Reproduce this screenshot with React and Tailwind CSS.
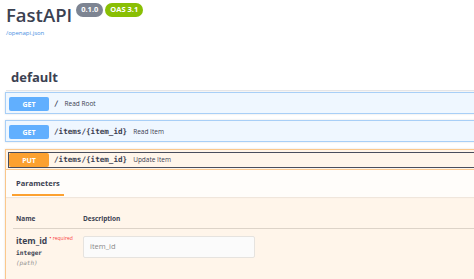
import React from 'react';

const sans = { fontFamily: '"Open Sans", "Noto Sans", sans-serif' };
const mono = { fontFamily: '"DejaVu Sans Mono", "Liberation Mono", monospace' };

function Badge({ color, children }) {
  return (
    <span
      className={`inline-flex h-[14px] items-center rounded-full px-[5px] text-[7.5px] font-bold leading-none text-white ${color}`}
    >
      {children}
    </span>
  );
}

function Summary({ method, path, label, btn, focus }) {
  const inner = (
    <div className="flex items-center">
      <span
        className={`flex h-[14px] w-[40px] items-center justify-center rounded-[2px] text-[7px] font-bold leading-none text-white ${btn}`}
      >
        {method}
      </span>
      <span style={mono} className="px-[5px] text-[7.6px] font-bold leading-none text-[#3b4151]">
        {path}
      </span>
      <span className="pl-px text-[6.5px] leading-none text-[#3b4151]">{label}</span>
    </div>
  );
  if (focus) {
    return (
      <div className="border-b border-[#fcc98f] p-[2px] pb-px">
        <div className="border border-[#4a4e5c]">{inner}</div>
      </div>
    );
  }
  return <div className="pl-[3px] pt-[4px] pb-[2px]">{inner}</div>;
}

export default function App() {
  return (
    <div style={sans} className="h-[279px] w-[474px] overflow-hidden bg-white text-[#3b4151]">
      <div className="w-[560px] pl-[6px]">
        <div className="flex items-start pt-[2px]">
          <h1 className="text-[18.5px] font-semibold leading-[25px] text-[#3b4151]">FastAPI</h1>
          <div className="ml-[4px] mt-px flex gap-[2px]">
            <Badge color="bg-[#7d8492]">0.1.0</Badge>
            <Badge color="bg-[#89bf04]">OAS 3.1</Badge>
          </div>
        </div>
        <a className="mt-[2px] block text-[6px] leading-[8px] text-[#4990e2]">/openapi.json</a>

        <div className="mt-[31px] pl-[5px]">
          <h2 className="text-[13px] font-bold leading-[18px] text-[#3b4151]">default</h2>
        </div>
        <div className="mt-[4px] border-b border-[#e6e7ea]" />

        <div className="-ml-px pt-px">
          <div className="border border-[#a8cff7] bg-[#eff7ff] shadow-[0_0_2px_rgba(0,0,0,0.12)]">
            <Summary method="GET" path="/" label="Read Root" btn="bg-[#61affe]" />
          </div>
          <div className="mt-[6px] border border-[#a8cff7] bg-[#eff7ff] shadow-[0_0_2px_rgba(0,0,0,0.12)]">
            <Summary method="GET" path="/items/{item_id}" label="Read Item" btn="bg-[#61affe]" />
          </div>
          <div className="mt-[7px] h-[200px] border border-[#fbc88c] bg-[#fff5ea] shadow-[0_0_2px_rgba(0,0,0,0.12)]">
            <Summary method="PUT" path="/items/{item_id}" label="Update Item" btn="bg-[#fca130]" focus />
            <div className="flex h-[27px] items-end bg-[#fffdfa] px-[6px] pb-px shadow-[0_1px_1px_rgba(0,0,0,0.06)]">
              <div className="border-b-[2px] border-[#fca130] px-[4px] pb-[6px] text-[7.5px] font-bold leading-[10px] text-[#3b4151]">
                Parameters
              </div>
            </div>
            <div className="ml-[7px] mr-[6px] mt-[17px]">
              <div className="flex border-b border-[#ddd3c8] pb-[4px] text-[6.5px] font-bold leading-[10px] text-[#3b4151]">
                <div className="w-[70px] pl-[3px]">Name</div>
                <div>Description</div>
              </div>
              <div className="flex pt-[6px]">
                <div className="w-[70px] pl-[3px]">
                  <div className="flex items-start">
                    <span className="text-[8.5px] font-bold leading-[11px] text-[#3b4151]">item_id</span>
                    <span className="ml-[2px] text-[5px] leading-[7px] text-[#f93e3e]">
                      <span className="text-[6px]">•</span> required
                    </span>
                  </div>
                  <div style={mono} className="mt-[2px] text-[6.2px] font-semibold leading-[9px] text-[#3b4151]">
                    integer
                  </div>
                  <div style={mono} className="mt-px text-[6px] italic leading-[9px] text-[#909090]">
                    (path)
                  </div>
                </div>
                <div className="pt-px">
                  <div className="flex h-[22px] w-[172px] items-center rounded-[2px] border border-[#e6e3df] bg-[#fbfbfb] pl-[6px] text-[7.5px] text-[#8a8a8a]">
                    item_id
                  </div>
                </div>
              </div>
            </div>
          </div>
        </div>
      </div>
    </div>
  );
}
